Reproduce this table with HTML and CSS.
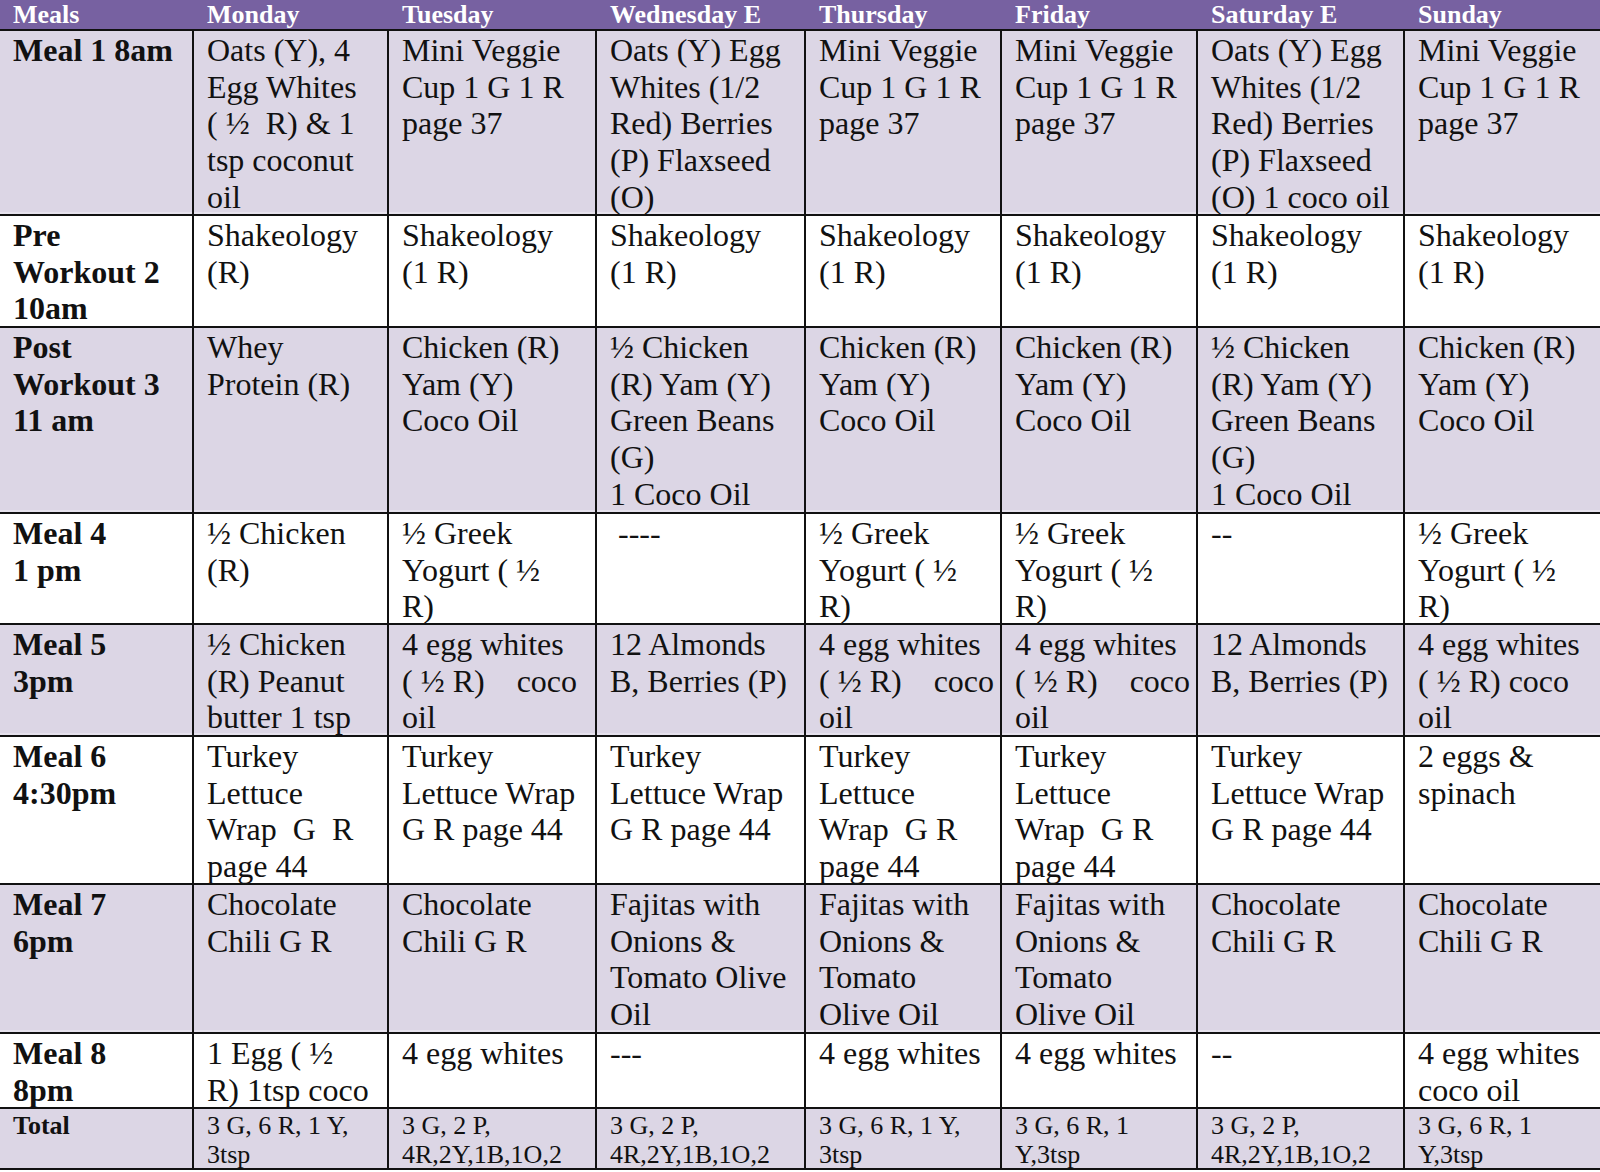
FILE: index.html
```html
<!DOCTYPE html>
<html>
<head>
<meta charset="utf-8">
<link rel="stylesheet" href="styles.css">
</head>
<body>
<div class="sheet">
  <div class="head">
    <div class="hc">Meals</div>
    <div class="hc">Monday</div>
    <div class="hc">Tuesday</div>
    <div class="hc">Wednesday E</div>
    <div class="hc">Thursday</div>
    <div class="hc">Friday</div>
    <div class="hc">Saturday E</div>
    <div class="hc">Sunday</div>
  </div>

  <!-- Row 1 -->
  <div class="c lav label">Meal 1 8am</div>
  <div class="c lav">Oats (Y), 4<br>Egg Whites<br>( ½&nbsp; R) &amp; 1<br>tsp coconut<br>oil</div>
  <div class="c lav">Mini Veggie<br>Cup 1 G 1 R<br>page 37</div>
  <div class="c lav">Oats (Y) Egg<br>Whites (1/2<br>Red) Berries<br>(P) Flaxseed<br>(O)</div>
  <div class="c lav">Mini Veggie<br>Cup 1 G 1 R<br>page 37</div>
  <div class="c lav">Mini Veggie<br>Cup 1 G 1 R<br>page 37</div>
  <div class="c lav">Oats (Y) Egg<br>Whites (1/2<br>Red) Berries<br>(P) Flaxseed<br>(O) 1 coco oil</div>
  <div class="c lav">Mini Veggie<br>Cup 1 G 1 R<br>page 37</div>

  <!-- Row 2 -->
  <div class="c label">Pre<br>Workout 2<br>10am</div>
  <div class="c">Shakeology<br>(R)</div>
  <div class="c">Shakeology<br>(1 R)</div>
  <div class="c">Shakeology<br>(1 R)</div>
  <div class="c">Shakeology<br>(1 R)</div>
  <div class="c">Shakeology<br>(1 R)</div>
  <div class="c">Shakeology<br>(1 R)</div>
  <div class="c">Shakeology<br>(1 R)</div>

  <!-- Row 3 -->
  <div class="c lav label">Post<br>Workout 3<br>11 am</div>
  <div class="c lav">Whey<br>Protein (R)</div>
  <div class="c lav">Chicken (R)<br>Yam (Y)<br>Coco Oil</div>
  <div class="c lav">½ Chicken<br>(R) Yam (Y)<br>Green Beans<br>(G)<br>1 Coco Oil</div>
  <div class="c lav">Chicken (R)<br>Yam (Y)<br>Coco Oil</div>
  <div class="c lav">Chicken (R)<br>Yam (Y)<br>Coco Oil</div>
  <div class="c lav">½ Chicken<br>(R) Yam (Y)<br>Green Beans<br>(G)<br>1 Coco Oil</div>
  <div class="c lav">Chicken (R)<br>Yam (Y)<br>Coco Oil</div>

  <!-- Row 4 -->
  <div class="c label">Meal 4<br>1 pm</div>
  <div class="c">½ Chicken<br>(R)</div>
  <div class="c">½ Greek<br>Yogurt ( ½<br>R)</div>
  <div class="c">&nbsp;----</div>
  <div class="c">½ Greek<br>Yogurt ( ½<br>R)</div>
  <div class="c">½ Greek<br>Yogurt ( ½<br>R)</div>
  <div class="c">--</div>
  <div class="c">½ Greek<br>Yogurt ( ½<br>R)</div>

  <!-- Row 5 -->
  <div class="c lav label">Meal 5<br>3pm</div>
  <div class="c lav">½ Chicken<br>(R) Peanut<br>butter 1 tsp</div>
  <div class="c lav">4 egg whites<br>( ½ R)&nbsp;&nbsp;&nbsp; coco<br>oil</div>
  <div class="c lav">12 Almonds<br>B, Berries (P)</div>
  <div class="c lav">4 egg whites<br>( ½ R)&nbsp;&nbsp;&nbsp; coco<br>oil</div>
  <div class="c lav">4 egg whites<br>( ½ R)&nbsp;&nbsp;&nbsp; coco<br>oil</div>
  <div class="c lav">12 Almonds<br>B, Berries (P)</div>
  <div class="c lav">4 egg whites<br>( ½ R) coco<br>oil</div>

  <!-- Row 6 -->
  <div class="c label">Meal 6<br>4:30pm</div>
  <div class="c">Turkey<br>Lettuce<br>Wrap&nbsp; G&nbsp; R<br>page 44</div>
  <div class="c">Turkey<br>Lettuce Wrap<br>G R page 44</div>
  <div class="c">Turkey<br>Lettuce Wrap<br>G R page 44</div>
  <div class="c">Turkey<br>Lettuce<br>Wrap&nbsp; G R<br>page 44</div>
  <div class="c">Turkey<br>Lettuce<br>Wrap&nbsp; G R<br>page 44</div>
  <div class="c">Turkey<br>Lettuce Wrap<br>G R page 44</div>
  <div class="c">2 eggs &amp;<br>spinach</div>

  <!-- Row 7 -->
  <div class="c lav label">Meal 7<br>6pm</div>
  <div class="c lav">Chocolate<br>Chili G R</div>
  <div class="c lav">Chocolate<br>Chili G R</div>
  <div class="c lav">Fajitas with<br>Onions &amp;<br>Tomato Olive<br>Oil</div>
  <div class="c lav">Fajitas with<br>Onions &amp;<br>Tomato<br>Olive Oil</div>
  <div class="c lav">Fajitas with<br>Onions &amp;<br>Tomato<br>Olive Oil</div>
  <div class="c lav">Chocolate<br>Chili G R</div>
  <div class="c lav">Chocolate<br>Chili G R</div>

  <!-- Row 8 -->
  <div class="c label">Meal 8<br>8pm</div>
  <div class="c">1 Egg ( ½<br>R) 1tsp coco</div>
  <div class="c">4 egg whites</div>
  <div class="c">---</div>
  <div class="c">4 egg whites</div>
  <div class="c">4 egg whites</div>
  <div class="c">--</div>
  <div class="c">4 egg whites<br>coco oil</div>

  <!-- Total -->
  <div class="c lav tot label">Total</div>
  <div class="c lav tot">3 G, 6 R, 1 Y,<br>3tsp</div>
  <div class="c lav tot">3 G, 2 P,<br>4R,2Y,1B,1O,2</div>
  <div class="c lav tot">3 G, 2 P,<br>4R,2Y,1B,1O,2</div>
  <div class="c lav tot">3 G, 6 R, 1 Y,<br>3tsp</div>
  <div class="c lav tot">3 G, 6 R, 1<br>Y,3tsp</div>
  <div class="c lav tot">3 G, 2 P,<br>4R,2Y,1B,1O,2</div>
  <div class="c lav tot">3 G, 6 R, 1<br>Y,3tsp</div>
</div>
</body>
</html>
```

FILE: styles.css
```css
html, body {
  margin: 0;
  padding: 0;
  background: #ffffff;
}

body {
  width: 1600px;
  height: 1172px;
  overflow: hidden;
  font-family: "Liberation Serif", "Times New Roman", serif;
  color: #111111;
}

.sheet {
  display: grid;
  grid-template-columns: 192px 193px 206px 207px 194px 194px 205px 195px;
  grid-template-rows: 29px 183px 110px 184px 109px 110px 146px 147px 73px 59px;
  gap: 2px;
  background: #111111;
  padding-bottom: 2px;
  width: 1600px;
}

.head {
  grid-column: 1 / -1;
  display: grid;
  grid-template-columns: 192px 193px 206px 207px 194px 194px 205px 195px;
  column-gap: 2px;
  background: #7761a1;
}

.hc {
  padding-left: 13px;
  font-weight: bold;
  font-size: 26px;
  line-height: 30px;
  color: #ffffff;
  white-space: nowrap;
  overflow: hidden;
}

.c {
  background: #ffffff;
  padding: 1px 0 0 13px;
  font-size: 32px;
  line-height: 36.7px;
  white-space: nowrap;
  overflow: hidden;
}

.lav {
  background: #dcd6e5;
  box-shadow: inset 0 -2px 0 #e6e2ed;
}

.label {
  font-weight: bold;
}

.tot {
  font-size: 26px;
  line-height: 29px;
  padding-top: 2px;
  box-shadow: none;
}
```
